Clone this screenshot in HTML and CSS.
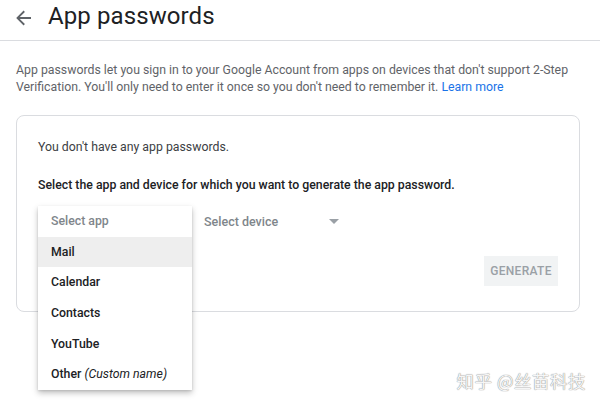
FILE: index.html
```html
<!DOCTYPE html>
<html>
<head>
<meta charset="utf-8">
<link rel="stylesheet" href="styles.css">
</head>
<body>
<header class="header">
  <svg class="back" width="16" height="16" viewBox="0 0 16 16"><path d="M15 7H3.8l5.1-5.1L7.6.6.2 8l7.4 7.4 1.3-1.3L3.8 9H15z" fill="#5f6368"/></svg>
  <h1 class="title">App passwords</h1>
</header>
<main class="main">
  <p class="intro">App passwords let you sign in to your Google Account from apps on devices that don't support 2-Step Verification. You'll only need to enter it once so you don't need to remember it. <a class="link">Learn more</a></p>
  <section class="card">
    <p class="none">You don't have any app passwords.</p>
    <p class="instr">Select the app and device for which you want to generate the app password.</p>
    <div class="selects">
      <div class="sel-app">
        <ul class="menu">
          <li class="item placeholder">Select app</li>
          <li class="item active">Mail</li>
          <li class="item">Calendar</li>
          <li class="item">Contacts</li>
          <li class="item">YouTube</li>
          <li class="item">Other <i>(Custom name)</i></li>
        </ul>
      </div>
      <div class="sel-dev"><span>Select device</span><span class="caret"></span></div>
    </div>
    <div class="actions"><button class="gen">GENERATE</button></div>
  </section>
</main>
<div class="watermark">知乎 @丝苗科技</div>
</body>
</html>
```
FILE: styles.css
```css
* { box-sizing: border-box; }
html, body { margin: 0; padding: 0; background: #fff; }
body { font-family: Roboto, "Noto Sans", Arial, sans-serif; width: 600px; height: 407px; overflow: hidden; position: relative; }
.header { height: 41px; border-bottom: 1px solid #dadce0; display: flex; align-items: center; padding-left: 16px; }
.back { margin-right: 16px; margin-top: -5px; }
.title { margin: 0; font-weight: 400; font-size: 24px; color: #202124; line-height: 28px; margin-top: -8px; letter-spacing: 0.1px; }
.main { padding: 0 16px; }
.intro { margin: 21px 0 0; font-size: 12.3px; line-height: 17px; color: #5f6368; }
.link { color: #1a73e8; }
.card { margin-top: 19px; border: 1px solid #dadce0; border-radius: 8px; padding: 21px 21px 25px; width: 564px; }
.none { margin: 0; font-size: 12.3px; line-height: 20px; color: #3c4043; }
.instr { margin: 18px 0 0; font-size: 12.3px; line-height: 20px; color: #202124; font-weight: 500; }
.selects { display: flex; gap: 12px; margin-top: 11px; height: 31px; }
.sel-app { width: 154px; position: relative; }
.menu { position: absolute; top: 0; left: 0; width: 154px; margin: 0; padding: 0; list-style: none; background: #fff; box-shadow: 0 3px 6px rgba(0,0,0,0.25), 0 1px 2px rgba(0,0,0,0.1); z-index: 2; }
.item { height: 30.67px; line-height: 31px; padding-left: 13px; font-size: 12.3px; font-weight: 500; color: #202124; }
.item i { font-weight: 400; }
.placeholder { color: #80868b; }
.active { background: #eeeeee; }
.sel-dev { width: 136px; display: flex; align-items: center; justify-content: space-between; font-size: 12.5px; font-weight: 500; color: #80868b; padding-right: 1px; }
.caret { width: 0; height: 0; border-left: 5px solid transparent; border-right: 5px solid transparent; border-top: 5px solid #9aa0a6; }
.actions { display: flex; justify-content: flex-end; margin-top: 19px; }
.gen { height: 30px; width: 74px; border: none; background: #f1f3f4; color: #9aa0a6; font-family: Roboto, Arial, sans-serif; font-size: 12px; font-weight: 500; letter-spacing: 0.3px; padding: 0; }
.watermark { position: absolute; right: 14px; top: 368px; font-family: "Noto Sans CJK SC", sans-serif; font-size: 17.5px; color: #f6f6f6; text-shadow: 0 0 1px #888, 0 0 1px #aaa; letter-spacing: 0.5px; }
```
